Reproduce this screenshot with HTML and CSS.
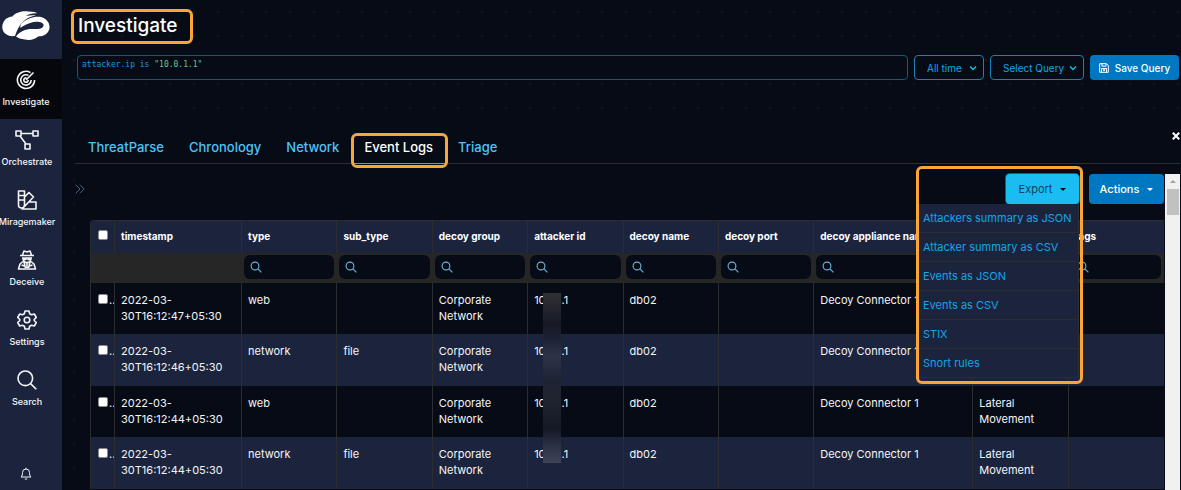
FILE: index.html
```html
<!DOCTYPE html>
<html lang="en">
<head>
<meta charset="utf-8">
<title>Investigate</title>
<link rel="stylesheet" href="styles.css">
</head>
<body>
<svg class="sprite" aria-hidden="true">
  <symbol id="search" viewBox="0 0 12 12"><circle cx="5" cy="5" r="3.9"/><path d="M7.9 7.9 11.4 11.4"/></symbol>
  <symbol id="chevron" viewBox="0 0 8 8"><path d="M1 2.5 4 5.500 7 2.5"/></symbol>
</svg>
<div class="app">
  <nav class="sidebar">
    <a class="logo" href="#" aria-label="Home">
      <svg width="48" height="30" viewBox="0 0 48 30">
        <path d="M13 25C5 26 0 21.500.3 15.500C.5 10 5 5.800 10.500 5.500C13 1.800 20-.2 26 .4C31 .3 34 1 35 2.200C30 2 27 3 24 5C28 4.200 31 4 34 4.500C24 6 17 12 13 25Z"/>
        <path d="M19 13C25 6.500 34 4.800 39 6C45 8 48 12 47.500 17C47 22 42 25.500 36 25.500C33 28.500 28 29.500 23 28.500C19 28 16 27 14 25.500C18 20 24 17.500 32 18C38 18.500 42 17 41.500 13.500C40 9.500 30 9 18 17Z"/>
      </svg>
    </a>
    <a class="nav-item active" href="#">
      <svg class="icon" viewBox="0 0 20 20"><path d="M14.500 2.600A8.600 8.600 0 1 0 18.600 10M12.500 5.400A5.200 5.200 0 1 0 15.200 10M10.500 7.900A2.200 2.200 0 1 0 12.200 10M10 10l7.500-7.500"/></svg>
      <span>Investigate</span>
    </a>
    <a class="nav-item" href="#">
      <svg class="icon wide" viewBox="0 0 24 20"><path d="M1 1h5v5H1zM18 1h5v5h-5zM10 14h5v5h-5zM6 3.500h12M5 6l6 8"/></svg>
      <span>Orchestrate</span>
    </a>
    <a class="nav-item" href="#">
      <svg class="icon" viewBox="0 0 20 20"><path d="M1.500 1h6v14a3 3 0 0 1-6 0zM1.500 5.500h6M1.500 10h6M7.500 7l4.500-4.500 4.500 4.500L6.500 17.500M12.500 12H19v7H4.500M4.500 15h.1"/></svg>
      <span>Miragemaker</span>
    </a>
    <a class="nav-item" href="#">
      <svg class="icon" viewBox="0 0 20 20"><path d="M5.500 5 7 1l3 1 3-1 1.500 4M3 5.500h14M5 8h10M6 8c0 6 8 6 8 0M7 8v1.500h2V8M11 8v1.500h2V8M6 11.500 3 14 1.500 19h17L17 14l-3-2.500M7 12l1.500 6M13 12l-1.500 6M4.500 15l3 1M15.500 15l-3 1M10 13v5"/></svg>
      <span>Deceive</span>
    </a>
    <a class="nav-item" href="#">
      <svg class="icon" viewBox="0 0 20 20"><circle cx="10" cy="10" r="2.800"/><path d="M8 1h4l.6 2.700 2 1.100 2.700-.8 2 3.500-2 1.800v1.400l2 1.800-2 3.500-2.700-.8-2 1.100L12 19H8l-.6-2.700-2-1.100-2.700.8-2-3.500 2-1.800V9.300l-2-1.800 2-3.500 2.700.8 2-1.100z"/></svg>
      <span>Settings</span>
    </a>
    <a class="nav-item" href="#">
      <svg class="icon" viewBox="0 0 20 20"><circle cx="8.300" cy="8.300" r="7.300"/><path d="M13.600 13.600 19.300 19.300"/></svg>
      <span>Search</span>
    </a>
    <button class="bell" aria-label="Notifications">
      <svg width="12" height="13" viewBox="0 0 12 13"><path d="M1 10h10C9.600 8.800 9.500 7.500 9.500 5.500a3.500 3.500 0 0 0-7 0C2.500 7.500 2.400 8.800 1 10zM6 2V.8M4.800 12h2.400"/></svg>
    </button>
  </nav>

  <main class="main">
    <h1 class="title">Investigate</h1>
    <form class="query-bar">
      <div class="editor">
        <code><span class="key">attacker.ip is</span> <span class="value">"10.0.1.1"</span></code>
        <input class="editor-input" type="text" aria-label="Query">
      </div>
      <div class="select-wrap time">
        <select aria-label="Time range"><option>All time</option></select>
        <svg class="chevron"><use href="#chevron"/></svg>
      </div>
      <div class="select-wrap saved">
        <select aria-label="Saved query"><option>Select Query</option></select>
        <svg class="chevron"><use href="#chevron"/></svg>
      </div>
      <button class="save" type="button">
        <svg width="10" height="10" viewBox="0 0 10 10"><path d="M.7.7h6.800l1.800 1.800v6.800H.7zM3 .7v2.500h4V.7M2.500 9.300V5.500h5v3.800"/><circle cx="5" cy="7" r=".8"/></svg>
        Save Query
      </button>
    </form>

    <section class="panel">
      <button class="close" aria-label="Close"><svg width="8" height="8" viewBox="0 0 8 8"><path d="M.8.8 7.200 7.200M7.200.8.8 7.200"/></svg></button>
      <div class="tabs">
        <a href="#">ThreatParse</a>
        <a href="#">Chronology</a>
        <a href="#">Network</a>
        <a class="current" href="#">Event Logs</a>
        <a href="#">Triage</a>
      </div>

      <div class="panel-body">
        <div class="content">
          <div class="toolbar">
            <button class="expand" aria-label="Expand"><svg width="10" height="10" viewBox="0 0 10 10"><path d="M.7.700 5 5 .7 9.300M4.900.700 9.200 5 4.900 9.300"/></svg></button>
            <div class="export">
              <button class="btn btn-export">Export <i class="caret"></i></button>
              <div class="menu">
                <a href="#">Attackers summary as JSON</a>
                <a href="#">Attacker summary as CSV</a>
                <a href="#">Events as JSON</a>
                <a href="#">Events as CSV</a>
                <a href="#">STIX</a>
                <a href="#">Snort rules</a>
              </div>
              <div class="menu-highlight"></div>
            </div>
            <button class="btn">Actions <i class="caret"></i></button>
          </div>

          <div class="table-wrap">
            <table>
              <colgroup><col class="c-check"><col class="c-time"><col><col><col><col><col><col><col class="c-wide"><col><col></colgroup>
              <thead>
                <tr class="head">
                  <th><input type="checkbox" aria-label="Select all"></th>
                  <th>timestamp</th><th>type</th><th>sub_type</th><th>decoy group</th><th>attacker id</th><th>decoy name</th><th>decoy port</th><th>decoy appliance name</th><th></th><th>tags</th>
                </tr>
                <tr class="filters">
                  <td></td><td></td>
                  <td><label class="filter"><svg><use href="#search"/></svg><input type="text" aria-label="Filter type"></label></td>
                  <td><label class="filter"><svg><use href="#search"/></svg><input type="text" aria-label="Filter sub_type"></label></td>
                  <td><label class="filter"><svg><use href="#search"/></svg><input type="text" aria-label="Filter decoy group"></label></td>
                  <td><label class="filter"><svg><use href="#search"/></svg><input type="text" aria-label="Filter attacker id"></label></td>
                  <td><label class="filter"><svg><use href="#search"/></svg><input type="text" aria-label="Filter decoy name"></label></td>
                  <td><label class="filter"><svg><use href="#search"/></svg><input type="text" aria-label="Filter decoy port"></label></td>
                  <td><label class="filter"><svg><use href="#search"/></svg><input type="text" aria-label="Filter decoy appliance name"></label></td>
                  <td></td>
                  <td><label class="filter"><svg><use href="#search"/></svg><input type="text" aria-label="Filter tags"></label></td>
                </tr>
              </thead>
              <tbody>
                <tr><td><input type="checkbox" aria-label="Select row 1">..</td><td>2022-03-30T16:12:47+05:30</td><td>web</td><td></td><td>Corporate Network</td><td>10.0.1.1</td><td>db02</td><td></td><td>Decoy Connector 1</td><td></td><td></td></tr>
                <tr><td><input type="checkbox" aria-label="Select row 2">..</td><td>2022-03-30T16:12:46+05:30</td><td>network</td><td>file</td><td>Corporate Network</td><td>10.0.1.1</td><td>db02</td><td></td><td>Decoy Connector 1</td><td></td><td></td></tr>
                <tr><td><input type="checkbox" aria-label="Select row 3">..</td><td>2022-03-30T16:12:44+05:30</td><td>web</td><td></td><td>Corporate Network</td><td>10.0.1.1</td><td>db02</td><td></td><td>Decoy Connector 1</td><td>Lateral Movement</td><td></td></tr>
                <tr><td><input type="checkbox" aria-label="Select row 4">..</td><td>2022-03-30T16:12:44+05:30</td><td>network</td><td>file</td><td>Corporate Network</td><td>10.0.1.1</td><td>db02</td><td></td><td>Decoy Connector 1</td><td>Lateral Movement</td><td></td></tr>
              </tbody>
            </table>
            <div class="redaction"></div>
          </div>
        </div>
        <div class="scrollbar"><i class="arrow"></i><i class="thumb"></i></div>
      </div>
    </section>
  </main>
</div>
</body>
</html>
```

FILE: styles.css
```css
:root {
  --bg: #070b16;
  --navy: #1c243d;
  --line: #2b2d30;
  --orange: #fba537;
  --blue: #0078c1;
  --cyan: #12a5e8;
}
* { box-sizing: border-box; }
body {
  margin: 0;
  background: var(--bg);
  color: #f4f5f7;
  font: 11px/16px Inter, "Liberation Sans", sans-serif;
}
a { color: inherit; text-decoration: none; }
button, input, select { font: inherit; color: inherit; }
button { border: 0; padding: 0; background: none; cursor: pointer; }
svg { fill: none; stroke: currentColor; display: block; }
.sprite { display: none; }

.app { display: flex; height: 100vh; overflow: hidden; }

.sidebar {
  flex: none;
  width: 62px;
  display: flex;
  flex-direction: column;
  background: var(--navy);
}
.logo { height: 59px; padding: 11px 0 0 2px; }
.logo svg { stroke: none; fill: #fff; }
.nav-item {
  height: 60px;
  width: 54px;
  display: flex;
  flex-direction: column;
  align-items: center;
  gap: 6px;
  padding-top: 11px;
  font-size: 9px;
  line-height: 12px;
  font-weight: 500;
}
.nav-item.active { width: 62px; padding-right: 10px; background: #05070d; }
.icon { width: 20px; height: 20px; stroke-width: 1.6; stroke-linejoin: round; }
.icon.wide { width: 24px; }
.bell { margin: auto 0 10px 20px; width: 12px; }

.main {
  flex: 1;
  min-width: 0;
  display: flex;
  flex-direction: column;
  background-image: radial-gradient(circle, #12151e 1px, transparent 2px);
  background-size: 24px 24px;
}
.title {
  align-self: flex-start;
  margin: 9px 0 11px 9px;
  padding: 2px 12px 3px 4px;
  border: 3px solid var(--orange);
  border-radius: 6px;
  font-size: 19px;
  line-height: 24px;
  font-weight: 500;
  color: #fff;
}

.query-bar { display: flex; gap: 6px; padding: 0 2px 0 15px; font-size: 10px; }
.editor {
  position: relative;
  flex: 1;
  height: 25px;
  padding: 3px 4px;
  border: 1px solid #055f80;
  border-radius: 4px;
  background: var(--bg);
}
.editor code { display: block; font: 8px/12px "DejaVu Sans Mono", monospace; }
.key { color: #1799e0; }
.value { color: #5fc98a; }
.editor-input {
  position: absolute;
  inset: 0;
  width: 100%;
  padding: 0 4px;
  border: 0;
  background: transparent;
}
.select-wrap { position: relative; color: var(--cyan); }
.select-wrap.time { width: 70px; }
.select-wrap.saved { width: 94px; }
.select-wrap select {
  appearance: none;
  width: 100%;
  height: 25px;
  padding: 0 0 0 12px;
  border: 1px solid #1683b4;
  border-radius: 4px;
  background: var(--bg);
}
.chevron {
  position: absolute;
  right: 7px;
  top: 9px;
  width: 8px;
  height: 8px;
  stroke-width: 1.4;
  color: #19c0d8;
  pointer-events: none;
}
.save {
  display: flex;
  align-items: center;
  justify-content: center;
  gap: 6px;
  width: 89px;
  border-radius: 4px;
  background: var(--blue);
  color: #fff;
  font-weight: 500;
  white-space: nowrap;
}

.panel {
  position: relative;
  flex: 1;
  min-height: 0;
  display: flex;
  flex-direction: column;
  margin: 39px 1px 0 13px;
  background: var(--bg);
}
.close { position: absolute; top: 13px; right: 0; color: #fff; }
.close svg { stroke-width: 2; }
.tabs {
  display: flex;
  gap: 1px;
  padding: 16px 0 0 1px;
  border-bottom: 1px solid var(--line);
  font-size: 13px;
  font-weight: 500;
  color: #4fc3f7;
}
.tabs a { position: relative; padding: 4px 12px 7px; line-height: 17px; }
.tabs .current { color: #fff; box-shadow: 0 1px #4d9fd0; }
.tabs .current::after {
  content: "";
  position: absolute;
  inset: -2px -3px -5px -1px;
  border: 3px solid var(--orange);
  border-radius: 6px;
}

.panel-body { flex: 1; min-height: 0; display: flex; gap: 1px; padding-top: 10px; }
.content { flex: 1; min-width: 0; }
.toolbar { display: flex; align-items: center; gap: 10px; }
.expand { margin-right: auto; color: #44667e; }
.btn {
  display: flex;
  align-items: center;
  justify-content: center;
  gap: 8px;
  width: 75px;
  height: 30px;
  border-radius: 4px;
  background: var(--blue);
  color: #fff;
  font-weight: 500;
}
.btn-export { width: 73px; background: #1bbcf2; color: #173f5e; font-weight: 400; box-shadow: 0 0 0 1px #0c6488; }
.caret { border: 3px solid transparent; border-top-color: currentColor; border-bottom: 0; }
.btn-export .caret { border-top-color: #05070d; }
.export { position: relative; z-index: 2; }
.menu {
  position: absolute;
  top: 100%;
  right: 0;
  width: 161px;
  border-right: 1px solid var(--line);
  background: var(--navy);
  color: var(--cyan);
  font-size: 11px;
}
.menu a {
  display: block;
  padding: 6px 5px;
  border-bottom: 1px solid var(--line);
  white-space: nowrap;
}
.menu-highlight {
  position: absolute;
  top: -8px;
  right: -4px;
  width: 167px;
  height: 218px;
  border: 3px solid var(--orange);
  border-radius: 6px;
  pointer-events: none;
}

.table-wrap { position: relative; margin: 16px 0 0 15px; }
table {
  width: 100%;
  table-layout: fixed;
  border-collapse: separate;
  border-spacing: 0;
  border: 1px solid var(--line);
  border-width: 1px 0 0 1px;
  border-radius: 4px 0 0 0;
}
.c-check { width: 24px; }
.c-time { width: 127px; }
.c-wide { width: 159px; }
th, td {
  overflow: hidden;
  padding: 9px 6px;
  border-right: 1px solid var(--line);
  text-align: left;
  vertical-align: top;
  white-space: nowrap;
}
tr > :last-child { border-right: 0; }
.head th { height: 32px; padding: 7px 6px; background: var(--navy); font-size: 10px; font-weight: 700; color: #fff; }
.head th:first-child { border-radius: 4px 0 0 0; }
.filters td { height: 30px; padding: 2px 3px 4px 2px; border-right: 0; background: #262626; }
.filter {
  display: flex;
  align-items: center;
  gap: 4px;
  height: 24px;
  padding: 0 6px;
  border-radius: 6px;
  background: var(--bg);
  color: #66b5dc;
}
.filter svg { flex: none; width: 12px; height: 12px; stroke-width: 1.1; }
.filter input { min-width: 0; width: 100%; border: 0; background: transparent; outline: 0; }
tbody td { height: 52px; white-space: normal; }
tbody tr:nth-child(odd) td { height: 51px; }
tbody tr:nth-child(even) { background: var(--navy); }
tbody td:first-child { padding-right: 0; white-space: nowrap; }
input[type="checkbox"] {
  appearance: none;
  width: 10px;
  height: 10px;
  margin: 1px 1px 0 7px;
  border: 1px solid #8b8b8b;
  border-radius: 2px;
  background: #fff;
}
td:first-child, .head th:first-child { padding-left: 0; }
.redaction {
  position: absolute;
  top: 73px;
  left: 453px;
  width: 18px;
  height: 170px;
  background: linear-gradient(#303036, #171a26 18%, #1c2233 27%, #2c3446 37%, #1e2333 52%, #20242f 62%, #151926 80%, #30364a 92%, #3e4456);
}

.scrollbar {
  flex: none;
  width: 15px;
  display: flex;
  flex-direction: column;
  align-items: center;
  background: #f1f1f1;
}
.arrow { margin: 6px 0; border: 3px solid transparent; border-bottom-color: #a0a0a0; border-top: 0; }
.thumb { width: 12px; height: 26px; background: #c1c1c1; }
```
